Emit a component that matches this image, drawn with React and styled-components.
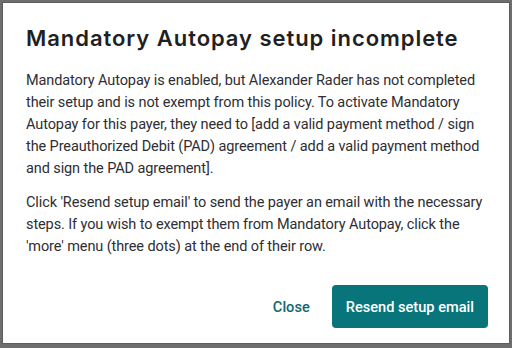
import React from "react"
import styled, { createGlobalStyle } from "styled-components"

const Global = createGlobalStyle`
  html, body {
    margin: 0;
    padding: 0;
  }
  body {
    width: 512px;
    height: 348px;
    overflow: hidden;
    background: #6e6e6e;
    font-family: Roboto, "Liberation Sans", sans-serif;
  }
`

const Backdrop = styled.div`
  width: 512px;
  height: 348px;
  box-sizing: border-box;
  padding: 3px 3px 5px 3px;
  display: flex;
`

const Dialog = styled.div`
  flex: 1;
  background: #ffffff;
  box-sizing: border-box;
  padding: 20px 21px 15px 23px;
  display: flex;
  flex-direction: column;
  box-shadow: 0 0 0 1px rgba(0, 0, 0, 0.15);
`

const Title = styled.h2`
  margin: 0;
  font-family: Inter, "Open Sans", sans-serif;
  font-weight: 600;
  font-size: 22px;
  line-height: 30px;
  color: #1f1f24;
  letter-spacing: 0.95px;
`

const Body = styled.div`
  margin-top: 17px;
  flex: 1;
`

const Para = styled.p`
  margin: 0 0 12px 0;
  font-size: 14.5px;
  letter-spacing: -0.1px;
  line-height: 22px;
  color: #2e2e33;
`

const Actions = styled.div`
  display: flex;
  justify-content: flex-end;
  align-items: center;
  gap: 6px;
`

const Button = styled.button`
  font-family: Roboto, "Liberation Sans", sans-serif;
  font-size: 14.6px;
  font-weight: 500;
  height: 43px;
  border-radius: 4px;
  cursor: pointer;
  padding: 0 ${(p) => (p.$primary ? "14px" : "16px")};
  border: none;
  background: ${(p) => (p.$primary ? "#08757a" : "transparent")};
  color: ${(p) => (p.$primary ? "#ffffff" : "#11686d")};
`

export default function App() {
  return (
    <Backdrop>
      <Global />
      <Dialog role="dialog">
        <Title>Mandatory Autopay setup incomplete</Title>
        <Body>
          <Para>
            Mandatory Autopay is enabled, but Alexander Rader has not completed
            their setup and is not exempt from this policy. To activate
            Mandatory Autopay for this payer, they need to [add a valid payment
            method / sign the Preauthorized Debit (PAD) agreement / add a valid
            payment method and sign the PAD agreement].
          </Para>
          <Para>
            Click 'Resend setup email' to send the payer an email with the
            necessary steps. If you wish to exempt them from Mandatory Autopay,
            click the 'more' menu (three dots) at the end of their row.
          </Para>
        </Body>
        <Actions>
          <Button>Close</Button>
          <Button $primary>Resend setup email</Button>
        </Actions>
      </Dialog>
    </Backdrop>
  )
}
